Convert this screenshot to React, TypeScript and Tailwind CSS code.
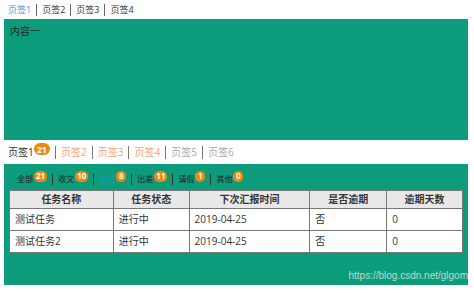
import React from "react";

const topTabs = ["页签1", "页签2", "页签3", "页签4"];

const midTabs = [
  { label: "页签1", badge: "21", tone: "text-[#333]" },
  { label: "页签2", tone: "text-[#f5a77e]" },
  { label: "页签3", tone: "text-[#f5a77e]" },
  { label: "页签4", tone: "text-[#f5a77e]" },
  { label: "页签5", tone: "text-[#aaa]" },
  { label: "页签6", tone: "text-[#aaa]" },
];

const subTabs = [
  { label: "全部", badge: "21", tone: "text-[#222]" },
  { label: "收文", badge: "10", tone: "text-[#222]" },
  { label: "发文", badge: "8", tone: "text-[#0e9fc4]" },
  { label: "出差", badge: "11", tone: "text-[#222]" },
  { label: "请假", badge: "1", tone: "text-[#222]" },
  { label: "其他", badge: "0", tone: "text-[#222]" },
];

const rows = [
  ["测试任务", "进行中", "2019-04-25", "否", "0"],
  ["测试任务2", "进行中", "2019-04-25", "否", "0"],
];

const Badge = ({ n, big }: { n: string; big?: boolean }) => (
  <span
    className={
      big
        ? "-mt-[6px] inline-flex h-[12px] min-w-[12px] items-center justify-center rounded-full bg-[#f08a0c] px-[3px] text-[9px] leading-none font-bold text-white"
        : "-mt-[6px] ml-[1px] inline-flex h-[11px] min-w-[10px] items-center justify-center rounded-full bg-[#f08a0c] px-[2px] text-[8px] leading-none font-bold text-white"
    }
  >
    {n}
  </span>
);

export default function App() {
  return (
    <div className="h-[293px] w-[474px] overflow-hidden bg-white font-['Open_Sans','Noto_Sans_CJK_SC',sans-serif] text-[10px] text-[#333]">
      {/* top tabs */}
      <div className="flex h-[19px] items-center pl-[8px] text-[9px]">
        {topTabs.map((t, i) => (
          <div key={t} className="flex items-center">
            {i > 0 && <span className="mx-[5px] h-[12px] w-px bg-[#666]" />}
            <span className={i === 0 ? "text-[#4a90d9]" : "text-[#333]"}>{t}</span>
          </div>
        ))}
      </div>
      <div className="mx-[4px] h-[121px] w-[464px] bg-[#0d9c7b] px-[6px] py-[5px] text-[#222]">
        内容一
      </div>

      {/* second tab strip */}
      <div className="flex h-[24px] items-center pl-[8px] text-[10px]">
        {midTabs.map((t, i) => (
          <div key={t.label} className="flex items-center">
            {i > 0 && <span className="mx-[5px] h-[13px] w-px bg-[#777]" />}
            <span className={t.tone}>{t.label}</span>
            {t.badge && <Badge n={t.badge} big />}
          </div>
        ))}
      </div>
      <div className="relative mx-[4px] h-[121px] w-[464px] bg-[#0d9c7b] px-[5px] pt-[4px]">
        <div className="flex h-[22px] items-center pl-[8px] text-[8px]">
          {subTabs.map((t, i) => (
            <div key={t.label} className="flex items-center">
              {i > 0 && <span className="mx-[5px] h-[11px] w-px bg-[#333]" />}
              <span className={t.tone}>{t.label}</span>
              <Badge n={t.badge} />
            </div>
          ))}
        </div>
        <table className="w-[454px] border-collapse border border-[#555] bg-white text-[10px] text-[#333]">
          <colgroup>
            <col className="w-[104px]" />
            <col className="w-[76px]" />
            <col className="w-[121px]" />
            <col className="w-[77px]" />
            <col className="w-[76px]" />
          </colgroup>
          <thead>
            <tr className="h-[18px] bg-[#e8e8e8]">
              {["任务名称", "任务状态", "下次汇报时间", "是否逾期", "逾期天数"].map((h) => (
                <th key={h} className="border border-[#777] p-0 text-center font-bold">
                  {h}
                </th>
              ))}
            </tr>
          </thead>
          <tbody>
            {rows.map((r, ri) => (
              <tr key={ri} className="h-[22px]">
                {r.map((c, ci) => (
                  <td key={ci} className="border border-[#777] px-[5px] py-0 text-left">
                    {c}
                  </td>
                ))}
              </tr>
            ))}
          </tbody>
        </table>
        <div className="absolute right-[0px] bottom-[2px] font-['Liberation_Sans',sans-serif] text-[10px] text-[#b8dcd2]">
          https://blog.csdn.net/glgom
        </div>
      </div>
    </div>
  );
}
